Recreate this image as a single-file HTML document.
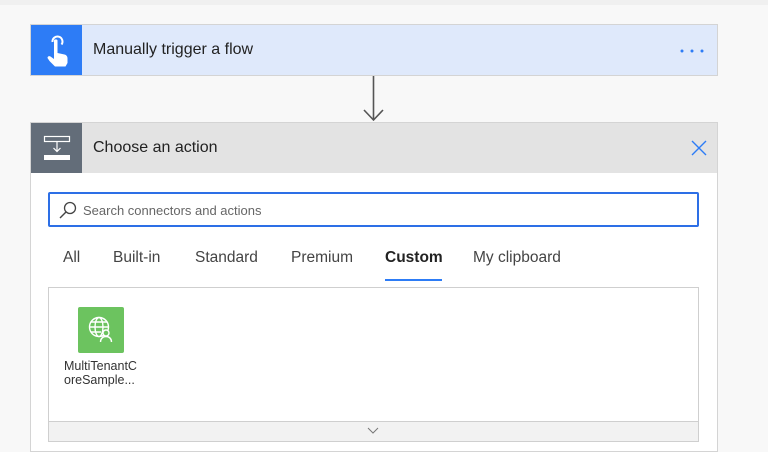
<!DOCTYPE html>
<html><head><meta charset="utf-8"><style>
*{box-sizing:border-box;margin:0;padding:0}
svg{display:block}
body{width:768px;height:442px;overflow:hidden;background:#f8f8f8;font-family:"Liberation Sans",sans-serif;position:relative}
.top{position:absolute;left:0;top:0;width:768px;height:5px;background:#f0f0f0}
.card{position:absolute;left:30px;width:688px;border:1px solid #d4d4d4}
.ic{position:absolute;left:0;top:0;width:51px;height:50px}
.title{position:absolute;left:62px;font-size:16px;color:#222}
.tab{position:absolute;font-size:15.5px;color:#444}
</style></head><body>
<div class="top"></div>
<div class="card" style="top:24px;height:52px;background:#dfe9fb">
 <div class="ic" style="background:#2d7cf6">
  <svg width="51" height="50" viewBox="0 0 51 50"><path d="M21.5 17a5 5 0 1 1 9 2.5" fill="none" stroke="#fff" stroke-width="2"/><path d="M23 15.5c0-1.5 3.5-1.5 3.5 0V28l7 1.5c2 .5 3 2 3 4V38l-2 3.5H24l-5.5-5.5-2-3c0-1.5 1.5-2.5 3-1.5L23 34z" fill="#fff"/></svg>
 </div>
 <div class="title" style="top:16px">Manually trigger a flow</div>
 <div style="position:absolute;left:649px;top:24px">
  <svg width="24" height="4"><circle cx="2" cy="2" r="1.5" fill="#2d7cf6"/><circle cx="12" cy="2" r="1.5" fill="#2d7cf6"/><circle cx="22" cy="2" r="1.5" fill="#2d7cf6"/></svg>
 </div>
</div>
<svg style="position:absolute;left:360px;top:76px" width="28" height="46"><path d="M13.5 0v44M4 34l9.5 10L23 34" fill="none" stroke="#555" stroke-width="1.6"/></svg>
<div class="card" style="top:122px;height:330px;background:#fff">
 <div style="position:absolute;left:0;top:0;width:686px;height:50px;background:#e3e3e3"></div>
 <div class="ic" style="background:#636d79">
  <svg width="51" height="50" viewBox="0 0 51 50"><rect x="13.5" y="13.5" width="25" height="5" fill="none" stroke="#fff" stroke-width="1.2"/><path d="M26 18.5v10M22.5 25l3.5 3.5 3.5-3.5" fill="none" stroke="#fff" stroke-width="1.2"/><rect x="13" y="32" width="26" height="5" fill="#fff"/></svg>
 </div>
 <div class="title" style="top:16px">Choose an action</div>
 <svg style="position:absolute;left:660px;top:17px" width="16" height="16"><path d="M1 1l14 14M15 1L1 15" stroke="#2d7cf6" stroke-width="1.4"/></svg>
 <div style="position:absolute;left:17px;top:69px;width:651px;height:35px;border:2px solid #2d6fe6;border-radius:2px;background:#fff">
  <svg style="position:absolute;left:8px;top:6px" width="20" height="20"><circle cx="12" cy="8" r="5.5" fill="none" stroke="#444" stroke-width="1.3"/><path d="M8 12l-6 6" stroke="#444" stroke-width="1.4"/></svg>
  <div style="position:absolute;left:33px;top:9px;font-size:13px;color:#666">Search connectors and actions</div>
 </div>
 <div class="tab" style="left:32px;top:126px">All</div>
 <div class="tab" style="left:82px;top:126px">Built-in</div>
 <div class="tab" style="left:164px;top:126px">Standard</div>
 <div class="tab" style="left:260px;top:126px">Premium</div>
 <div class="tab" style="left:354px;top:126px;color:#222;font-weight:bold">Custom</div>
 <div style="position:absolute;left:354px;top:156px;width:57px;height:2px;background:#2d7cf6"></div>
 <div class="tab" style="left:442px;top:126px">My clipboard</div>
 <div style="position:absolute;left:17px;top:164px;width:651px;height:155px;border:1px solid #cfcfcf;background:#fff">
  <div style="position:absolute;left:29px;top:19px;width:46px;height:46px;background:#6cc35f;border-radius:2px">
   <svg width="46" height="46" viewBox="0 0 46 46"><g fill="none" stroke="#fff" stroke-width="1.4"><circle cx="21" cy="20" r="9.5"/><ellipse cx="21" cy="20" rx="4" ry="9.5"/><path d="M11.5 20h19M13 15h16M13 25h10"/><circle cx="28" cy="26" r="3" fill="#6cc35f"/><path d="M22.5 35c0-3.5 2.5-5.5 5.5-5.5s5.5 2 5.5 5.5" fill="#6cc35f"/></g></svg>
  </div>
  <div style="position:absolute;left:15px;top:71px;font-size:12.5px;line-height:14px;color:#333">MultiTenantC<br>oreSample...</div>
  <div style="position:absolute;left:0;top:133px;width:649px;height:20px;background:#f2f2f2;border-top:1px solid #cfcfcf">
   <svg style="position:absolute;left:318px;top:5px" width="12" height="8"><path d="M1 1l5 5 5-5" fill="none" stroke="#777" stroke-width="1"/></svg>
  </div>
 </div>
</div>
</body></html>
